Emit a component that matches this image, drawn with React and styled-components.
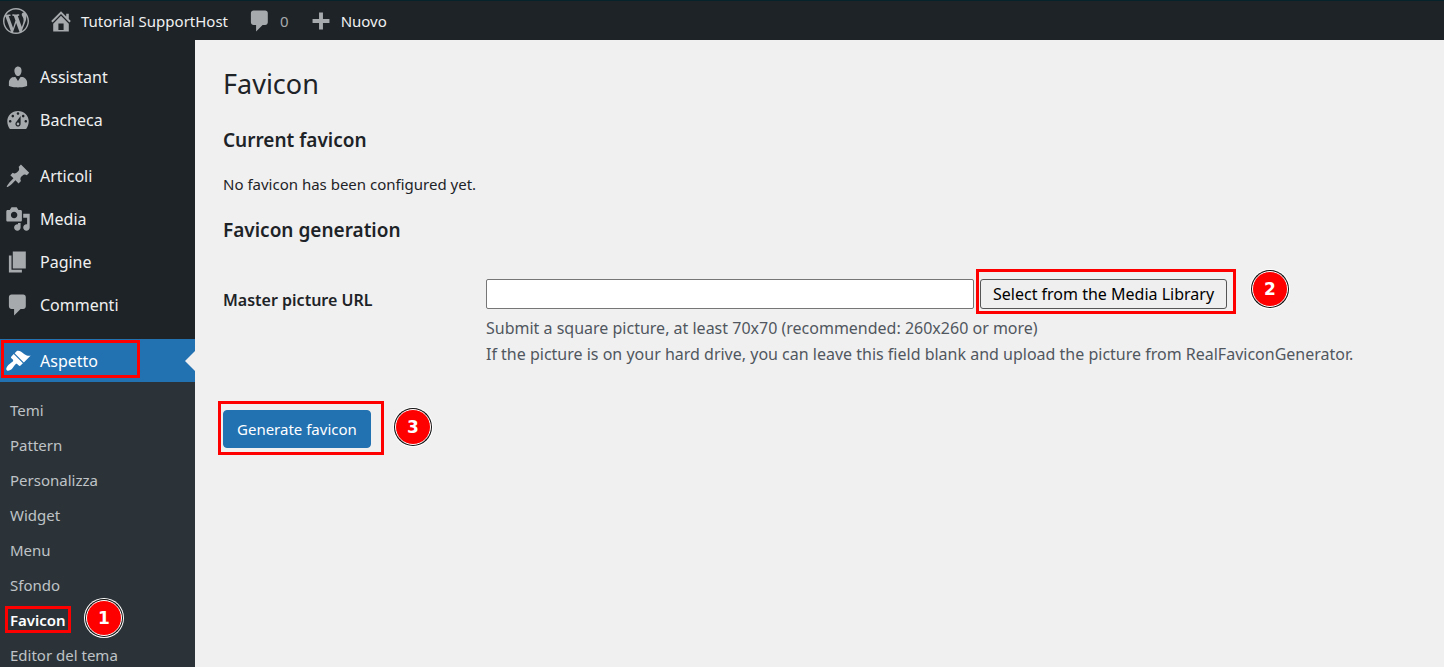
import React from "react";
import styled, { createGlobalStyle, css } from "styled-components";

const GlobalStyle = createGlobalStyle`
    * {
        box-sizing: border-box;
    }
    html {
        scrollbar-width: none;
    }
    body {
        margin: 0;
        background: #f0f0f1;
        color: #1d2327;
        font-family: "Noto Sans", "Open Sans", sans-serif;
        font-size: 15px;
    }
    button,
    input {
        font-family: inherit;
    }
    a {
        color: inherit;
        text-decoration: none;
    }
`;

const ICONS = {
    wordpress:
        "M20 10c0-5.51-4.49-10-10-10C4.48 0 0 4.49 0 10c0 5.52 4.48 10 10 10 5.51 0 10-4.48 10-10zM7.78 15.37L4.37 6.22c.55-.02 1.17-.08 1.17-.08.5-.06.44-1.13-.06-1.11 0 0-1.45.11-2.37.11-.18 0-.37 0-.58-.01C4.12 2.69 6.87 1.11 10 1.11c2.33 0 4.45.87 6.05 2.34-.68-.11-1.65.39-1.65 1.58 0 .74.45 1.36.9 2.1.35.61.55 1.36.55 2.46 0 1.49-1.4 5-1.4 5l-3.03-8.37c.54-.02.82-.17.82-.17.5-.05.44-1.25-.06-1.22 0 0-1.44.12-2.38.12-.87 0-2.33-.12-2.33-.12-.5-.03-.56 1.2-.06 1.22l.92.08 1.26 3.41zM17.41 10c.24-.64.74-1.87.43-4.25.7 1.29 1.05 2.71 1.05 4.25 0 3.29-1.73 6.24-4.4 7.78.97-2.59 1.94-5.2 2.92-7.78zM6.1 18.09C3.12 16.65 1.11 13.53 1.11 10c0-1.3.23-2.48.72-3.59C3.25 10.3 4.67 14.2 6.1 18.09zm4.03-6.63l2.58 6.98c-.86.29-1.76.45-2.71.45-.79 0-1.57-.11-2.29-.33.81-2.38 1.62-4.74 2.42-7.1z",
    home: "M16 8.5l1.53 1.53-1.06 1.06L10 4.6l-6.47 6.49-1.06-1.06L10 2.5l4 4v-2h2v4zm-6-2.46l6 5.99V18H4v-5.97zM12 17v-5H8v5h4z",
    comment:
        "M5 2h9q.82 0 1.41.59T16 4v7q0 .82-.59 1.41T14 13h-2l-5 5v-5H5q-.82 0-1.41-.59T3 11V4q0-.82.59-1.41T5 2z",
    plus: "M16.5 8.5v3h-5v5h-3v-5h-5v-3h5v-5h3v5h5z",
    user: "M7.3 6l-.03-.19c-.04-.37-.05-.73-.03-1.08.02-.36.1-.71.25-1.04.14-.32.31-.61.52-.86s.49-.46.83-.6c.34-.15.72-.23 1.13-.23.69 0 1.26.2 1.71.59s.76.87.91 1.44.18 1.16.09 1.78l-.03.19c-.01.09-.05.25-.11.48-.05.24-.12.47-.2.69-.08.21-.19.45-.34.72-.14.27-.3.49-.47.69-.18.19-.4.34-.67.48-.27.13-.55.19-.86.19s-.59-.06-.87-.19c-.26-.13-.49-.29-.67-.5-.18-.2-.34-.42-.49-.66-.15-.25-.26-.49-.34-.73-.09-.25-.16-.47-.21-.67-.06-.21-.1-.37-.12-.5zm9.2 6.24c.41.7.5 1.41.5 2.14v2.49c0 .03-.12.08-.29.13-.18.04-.42.13-.97.27-.55.12-1.1.24-1.65.34s-1.19.19-1.95.27c-.75.08-1.46.12-2.13.12-.68 0-1.39-.04-2.14-.12-.75-.07-1.4-.17-1.98-.27-.58-.11-1.08-.23-1.56-.34-.49-.11-.8-.21-1.06-.29L3 16.87v-2.49c0-.75.07-1.46.46-2.15s.81-1.25 1.5-1.68C5.66 10.12 7.19 10 8 10l2 3 1.97-3c.77 0 2.2.07 2.9.52.71.45 1.21 1.02 1.63 1.72z",
    dashboard:
        "M3.76 17h12.48c1.34-1.64 2.01-3.98 2.01-6 0-4.42-3.58-8-8.25-8s-8.25 3.58-8.25 8c0 2.02.67 4.36 2.01 6zM10 4c.55 0 1 .45 1 1s-.45 1-1 1-1-.45-1-1 .45-1 1-1zM6 6c.55 0 1 .45 1 1s-.45 1-1 1-1-.45-1-1 .45-1 1-1zm8 0c.55 0 1 .45 1 1s-.45 1-1 1-1-.45-1-1 .45-1 1-1zm-5.37 5.55L12 7v6c0 1.1-.9 2-2 2s-2-.9-2-2c0-.57.24-1.08.63-1.45zM4 10c.55 0 1 .45 1 1s-.45 1-1 1-1-.45-1-1 .45-1 1-1zm12 0c.55 0 1 .45 1 1s-.45 1-1 1-1-.45-1-1 .45-1 1-1zm-5 3c0-.55-.45-1-1-1s-1 .45-1 1 .45 1 1 1 1-.45 1-1z",
    pin: "M10.44 3.02l1.82-1.82 6.36 6.35-1.83 1.82c-1.05-.68-2.48-.57-3.41.36l-.75.75c-.92.93-1.04 2.35-.35 3.41l-1.83 1.82-2.41-2.41-2.8 2.79c-.42.42-3.38 2.71-3.8 2.29s1.86-3.39 2.28-3.81l2.79-2.79L4.1 9.36l1.83-1.82c1.05.69 2.48.57 3.4-.36l.75-.75c.93-.92 1.05-2.35.36-3.41z",
    media: "M13 11V4c0-.55-.45-1-1-1h-1.67L9 1H5L3.67 3H2c-.55 0-1 .45-1 1v7c0 .55.45 1 1 1h10c.55 0 1-.45 1-1zM7 4.5c1.38 0 2.5 1.12 2.5 2.5S8.38 9.5 7 9.5 4.5 8.38 4.5 7 5.62 4.5 7 4.5zM14 6h5v10.5c0 1.38-1.12 2.5-2.5 2.5S14 17.88 14 16.5s1.12-2.5 2.5-2.5c.17 0 .34.02.5.05V9h-3V6zm-4 8.05V13h2v3.5c0 1.38-1.12 2.5-2.5 2.5S7 17.88 7 16.5 8.12 14 9.5 14c.17 0 .34.02.5.05z",
    page: "M6 15V2h10v13H6zm-1 1h8v2H3V5h2v11z",
    appearance:
        "M14.48 11.06L7.41 3.99l1.5-1.5c.5-.56 2.3-.47 3.51.32 1.21.8 1.43 1.28 2.91 2.1 1.18.64 2.45 1.26 4.45.85zm-.71.71L6.7 4.7 4.93 6.47c-.39.39-.39 1.02 0 1.41l1.06 1.06c.39.39.39 1.03 0 1.42-.6.6-1.43 1.11-2.21 1.69-.35.26-.7.53-1.01.84C1.43 14.23.4 16.08 1.4 17.07c.99 1 2.84-.03 4.18-1.36.31-.31.58-.66.85-1.02.57-.78 1.08-1.61 1.69-2.21.39-.39 1.02-.39 1.41 0l1.06 1.06c.39.39 1.02.39 1.41 0z",
};

const StyledIcon = styled.svg`
    flex: none;
    width: 26px;
    height: 26px;
    fill: #a7aaad;
`;

const Icon = ({ name, ...props }) => (
    <StyledIcon viewBox="0 0 20 20" aria-hidden="true" {...props}>
        <path fillRule="evenodd" d={ICONS[name]} />
    </StyledIcon>
);

const AdminBar = styled.header`
    display: flex;
    align-items: center;
    gap: 19px;
    height: 40px;
    padding: 0 3px;
    background: #1d2327;
    color: #f0f0f1;
    border-top: 1px solid #06232b;
`;

const BarLink = styled.a`
    display: flex;
    align-items: center;
    gap: 7px;
    line-height: 20px;
`;

const Count = styled.span`
    color: #a7aaad;
`;

const Layout = styled.div`
    display: flex;
    min-height: calc(100vh - 40px);
`;

const Sidebar = styled.nav`
    flex: none;
    width: 195px;
    padding-top: 15px;
    background: #1d2327;
`;

const MenuList = styled.ul`
    list-style: none;
    margin: 0 0 13px;
    padding: 0;
`;

const MenuLink = styled.a`
    position: relative;
    display: flex;
    align-items: center;
    gap: 9px;
    height: 43px;
    padding-left: 5px;
    color: #f0f0f1;
    font-size: 16px;

    ${({ $current }) =>
        $current &&
        css`
            background: #2271b1;
            color: #fff;

            ${StyledIcon} {
                fill: #fff;
            }
            &:after {
                content: "";
                position: absolute;
                top: 50%;
                right: 0;
                margin-top: -10px;
                border: 10px solid transparent;
                border-left-width: 0;
                border-right-color: #f0f0f1;
            }
        `}
`;

const SubMenu = styled.ul`
    list-style: none;
    margin: 0;
    padding: 10px 0;
    background: #2c3338;
`;

const SubLink = styled.a`
    position: relative;
    display: flex;
    align-items: center;
    height: 35px;
    padding-left: 10px;
    color: ${({ $current }) => ($current ? "#fff" : "#bfc3c7")};
    font-weight: ${({ $current }) => ($current ? 600 : 400)};
`;

const Content = styled.main`
    flex: 1;
    min-width: 0;
    padding: 28px 28px 40px;
`;

const PageTitle = styled.h1`
    margin: 0 0 24px;
    font-size: 27px;
    font-weight: 400;
    line-height: 32px;
`;

const SectionTitle = styled.h2`
    margin: 0;
    font-size: 19px;
    font-weight: 600;
    line-height: 32px;
`;

const Text = styled.p`
    margin: 16px 0 18px;
    line-height: 24px;
`;

const FormRow = styled.div`
    display: grid;
    grid-template-columns: 263px 1fr;
    margin-top: 33px;
`;

const Label = styled.label`
    padding-top: 9px;
    font-size: 16px;
    font-weight: 600;
    line-height: 24px;
`;

const Controls = styled.div`
    display: flex;
    gap: 6px;
`;

const UrlInput = styled.input`
    width: 488px;
    height: 30px;
    padding: 0 8px;
    border: 1px solid #767676;
    border-radius: 2px;
    background: #fff;
    font-size: 16px;
`;

const Description = styled.p`
    margin: 6px 0 0;
    color: #50575e;
    font-size: 16px;
    line-height: 26px;
`;

const Annotated = styled.div`
    position: relative;
    width: fit-content;
`;

const MediaButton = styled.button`
    height: 30px;
    padding: 0 12px;
    border: 1px solid #555;
    border-radius: 3px;
    background: #efefef;
    color: #000;
    font-size: 16px;
    line-height: 26px;
`;

const Submit = styled.div`
    margin-top: 43px;
`;

const PrimaryButton = styled.button`
    height: 38px;
    padding: 0 13px;
    border: 1px solid #2271b1;
    border-radius: 4px;
    background: #2271b1;
    color: #fff;
    font-size: 15px;
`;

// Red frame and numbered marker drawn over a control
const Highlight = styled.span`
    position: absolute;
    top: ${({ $top }) => $top}px;
    left: ${({ $left }) => $left}px;
    width: ${({ $width }) => $width}px;
    height: ${({ $height }) => $height}px;
    border: 3px solid #fe0000;
    pointer-events: none;
`;

const Badge = styled.span`
    position: absolute;
    top: ${({ $top }) => $top}px;
    left: ${({ $left }) => $left}px;
    display: flex;
    align-items: center;
    justify-content: center;
    width: 36px;
    height: 36px;
    border: 1px solid #fff;
    border-radius: 50%;
    box-shadow: 0 0 0 1px #111, 0 0 0 2px #fff;
    background: #fe0000;
    color: #fff;
    font-family: "DejaVu Sans", sans-serif;
    font-size: 17px;
    font-weight: 700;
`;

const MENU = [
    [
        { label: "Assistant", icon: "user" },
        { label: "Bacheca", icon: "dashboard" },
    ],
    [
        { label: "Articoli", icon: "pin" },
        { label: "Media", icon: "media" },
        { label: "Pagine", icon: "page" },
        { label: "Commenti", icon: "comment" },
    ],
];

const SUBMENU = [
    "Temi",
    "Pattern",
    "Personalizza",
    "Widget",
    "Menu",
    "Sfondo",
    "Favicon",
    "Editor del tema",
];

const App = () => {
    return (
        <>
            <GlobalStyle />
            <AdminBar>
                <BarLink href="#" aria-label="WordPress">
                    <Icon name="wordpress" />
                </BarLink>
                <BarLink href="#">
                    <Icon name="home" />
                    Tutorial SupportHost
                </BarLink>
                <BarLink href="#">
                    <Icon name="comment" />
                    <Count>0</Count>
                </BarLink>
                <BarLink href="#">
                    <Icon name="plus" />
                    Nuovo
                </BarLink>
            </AdminBar>
            <Layout>
                <Sidebar>
                    {MENU.map((group) => (
                        <MenuList key={group[0].label}>
                            {group.map(({ label, icon }) => (
                                <li key={label}>
                                    <MenuLink href="#">
                                        <Icon name={icon} />
                                        {label}
                                    </MenuLink>
                                </li>
                            ))}
                        </MenuList>
                    ))}
                    <MenuLink href="#" $current>
                        <Icon name="appearance" />
                        Aspetto
                        <Highlight $top={1} $left={1} $width={139} $height={38} />
                    </MenuLink>
                    <SubMenu>
                        {SUBMENU.map((label) => (
                            <li key={label}>
                                <SubLink href="#" $current={label === "Favicon"}>
                                    {label}
                                    {label === "Favicon" && (
                                        <>
                                            <Highlight $top={4} $left={5} $width={66} $height={27} />
                                            <Badge $top={-2} $left={86}>
                                                1
                                            </Badge>
                                        </>
                                    )}
                                </SubLink>
                            </li>
                        ))}
                    </SubMenu>
                </Sidebar>
                <Content>
                    <PageTitle>Favicon</PageTitle>
                    <SectionTitle>Current favicon</SectionTitle>
                    <Text>No favicon has been configured yet.</Text>
                    <SectionTitle>Favicon generation</SectionTitle>
                    <FormRow>
                        <Label htmlFor="master-picture">Master picture URL</Label>
                        <div>
                            <Controls>
                                <UrlInput id="master-picture" type="text" />
                                <Annotated>
                                    <MediaButton type="button">
                                        Select from the Media Library
                                    </MediaButton>
                                    <Highlight $top={-10} $left={-4} $width={260} $height={45} />
                                    <Badge $top={-8} $left={272}>
                                        2
                                    </Badge>
                                </Annotated>
                            </Controls>
                            <Description>
                                Submit a square picture, at least 70x70 (recommended: 260x260 or
                                more)
                                <br />
                                If the picture is on your hard drive, you can leave this field blank
                                and upload the picture from RealFaviconGenerator.
                            </Description>
                        </div>
                    </FormRow>
                    <Submit>
                        <Annotated>
                            <PrimaryButton type="submit">Generate favicon</PrimaryButton>
                            <Highlight $top={-9} $left={-5} $width={166} $height={54} />
                            <Badge $top={-1} $left={172}>
                                3
                            </Badge>
                        </Annotated>
                    </Submit>
                </Content>
            </Layout>
        </>
    );
};

export default App;
